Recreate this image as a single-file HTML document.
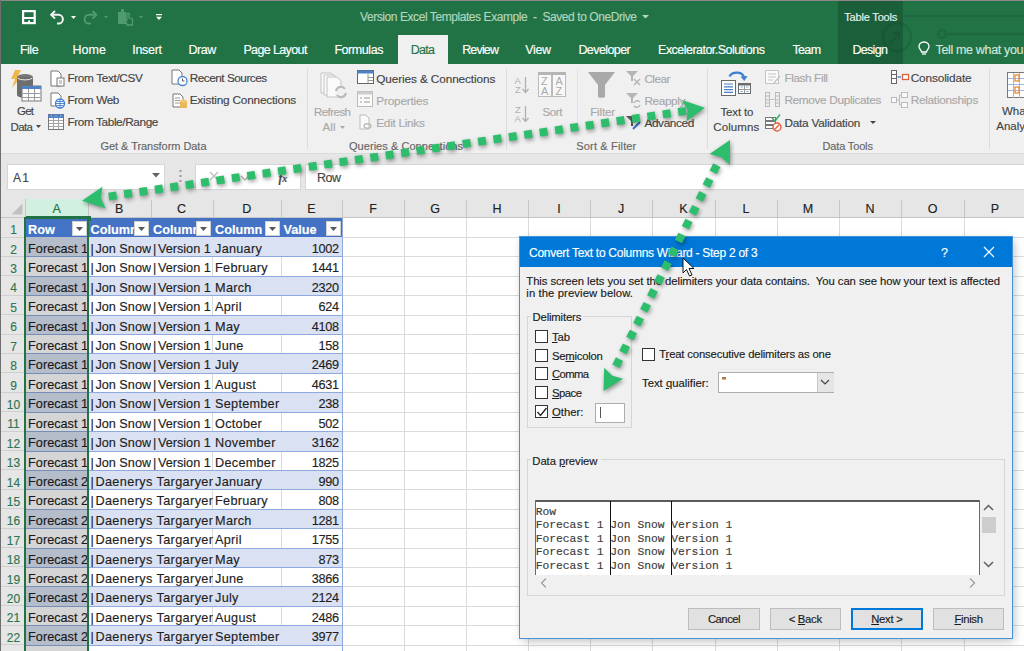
<!DOCTYPE html><html><head><meta charset="utf-8"><style>
html,body{margin:0;padding:0;}
body{width:1024px;height:651px;overflow:hidden;position:relative;background:#fff;font-family:"Liberation Sans",sans-serif;}
.b{position:absolute;}
.t{position:absolute;white-space:pre;line-height:1;-webkit-text-stroke:0.15px currentColor;}
.s{position:absolute;overflow:visible;}
</style></head><body>
<div class="b" style="left:0px;top:0px;width:1024px;height:64px;background:#217346;"></div>
<div class="b" style="left:838px;top:0px;width:65px;height:64px;background:#1b5f3a;"></div>
<svg class="s" style="left:838px;top:0" width="186" height="64" viewBox="0 0 186 64"><g stroke="#000" stroke-opacity="0.09" stroke-width="2.5" fill="none"><circle cx="59" cy="37" r="14"></circle><path d="M52 44 L60 34 M54 33 H61 V40"></path><path d="M66 16 H186"></path><path d="M109 34 H186"></path><circle cx="104" cy="34" r="4"></circle></g></svg>
<div class="b" style="left:0px;top:0px;width:1024px;height:1px;background:#8d8787;"></div>
<svg class="s" style="left:22px;top:10px;" width="15" height="15" viewBox="0 0 15 15"><g fill="none" stroke="#fff" stroke-width="2.2"><rect x="1.1" y="1.1" width="11.6" height="12"></rect></g><rect x="1" y="7" width="12" height="2" fill="#fff"></rect><rect x="6" y="10.5" width="2" height="3" fill="#fff"></rect></svg>
<svg class="s" style="left:49px;top:10px;" width="16" height="15" viewBox="0 0 16 15"><g fill="none" stroke="#f4f4f4" stroke-width="2"><path d="M2.5 4.8 H9.5 A4.4 4.4 0 0 1 9.5 13.6 H8"></path><path d="M6 1 L2.2 4.8 L6 8.6"></path></g></svg>
<svg class="s" style="left:70.5px;top:15.5px;" width="5" height="3" viewBox="0 0 5 3"><path d="M0 0 H5 L2.5 3 Z" fill="#fff"></path></svg>
<svg class="s" style="left:83px;top:10px;" width="16" height="15" viewBox="0 0 16 15"><g fill="none" stroke="#4f9a6e" stroke-width="2"><path d="M12.5 4.8 H6 A4.4 4.4 0 0 0 6 13.6 H8"></path><path d="M9.5 1 L13.3 4.8 L9.5 8.6"></path></g></svg>
<svg class="s" style="left:104px;top:15.5px;" width="4" height="2.5" viewBox="0 0 4 2.5"><path d="M0 0 H4 L2 2.5 Z" fill="#4f9a6e"></path></svg>
<svg class="s" style="left:117px;top:8px;" width="17" height="18" viewBox="0 0 17 18"><g fill="#4f9a6e"><rect x="1" y="4" width="8" height="12"></rect><rect x="4" y="1" width="3" height="4"></rect></g><path d="M10 5.5 V12 L8.5 12 L10 17 H15.5 V11 L12 10 V5.5 Z" fill="none" stroke="#4f9a6e" stroke-width="1.3"></path></svg>
<svg class="s" style="left:138.5px;top:15.5px;" width="4" height="2.5" viewBox="0 0 4 2.5"><path d="M0 0 H4 L2 2.5 Z" fill="#4f9a6e"></path></svg>
<svg class="s" style="left:155.5px;top:14px;" width="6" height="7" viewBox="0 0 6 7"><g fill="#fff"><rect x="0" y="0" width="6" height="1.2"></rect><path d="M0 2.8 H6 L3 6 Z"></path></g></svg>
<div class="t " style="left: 360px; top: 11.24px; font-size: 12px; color: rgb(178, 214, 191); letter-spacing: -0.428px;">Version Excel Templates Example &nbsp;-&nbsp; Saved to OneDrive</div>
<svg class="s" style="left:642px;top:15px;" width="7" height="4" viewBox="0 0 7 4"><path d="M0 0 H7 L3.5 3.5 Z" fill="#b2d6bf"></path></svg>
<div class="t " style="left: 844.3px; top: 12.09px; font-size: 11px; color: rgb(232, 241, 236); letter-spacing: -0.184px;">Table Tools</div>
<div class="b" style="left:398px;top:35px;width:50px;height:29px;background:#f0f0f0;"></div>
<div class="t " style="left: 20px; top: 43.62px; font-size: 12.5px; color: rgb(255, 255, 255); letter-spacing: -0.519px;">File</div>
<div class="t " style="left: 72.4px; top: 43.62px; font-size: 12.5px; color: rgb(255, 255, 255); letter-spacing: 0.085px;">Home</div>
<div class="t " style="left: 132.2px; top: 43.62px; font-size: 12.5px; color: rgb(255, 255, 255); letter-spacing: -0.273px;">Insert</div>
<div class="t " style="left: 188.4px; top: 43.62px; font-size: 12.5px; color: rgb(255, 255, 255); letter-spacing: -0.391px;">Draw</div>
<div class="t " style="left: 243.4px; top: 43.62px; font-size: 12.5px; color: rgb(255, 255, 255); letter-spacing: -0.62px;">Page Layout</div>
<div class="t " style="left: 334.4px; top: 43.62px; font-size: 12.5px; color: rgb(255, 255, 255); letter-spacing: -0.442px;">Formulas</div>
<div class="t " style="left: 410.7px; top: 43.62px; font-size: 12.5px; color: rgb(33, 115, 70); letter-spacing: -0.735px;">Data</div>
<div class="t " style="left: 462.2px; top: 43.62px; font-size: 12.5px; color: rgb(255, 255, 255); letter-spacing: -0.84px;">Review</div>
<div class="t " style="left: 525.2px; top: 43.62px; font-size: 12.5px; color: rgb(255, 255, 255); letter-spacing: -0.325px;">View</div>
<div class="t " style="left: 578.4px; top: 43.62px; font-size: 12.5px; color: rgb(255, 255, 255); letter-spacing: -0.573px;">Developer</div>
<div class="t " style="left: 658.1px; top: 43.62px; font-size: 12.5px; color: rgb(255, 255, 255); letter-spacing: -0.532px;">Excelerator.Solutions</div>
<div class="t " style="left: 792.4px; top: 43.62px; font-size: 12.5px; color: rgb(255, 255, 255); letter-spacing: -0.626px;">Team</div>
<div class="t " style="left: 852.4px; top: 43.62px; font-size: 12.5px; color: rgb(255, 255, 255); letter-spacing: -0.684px;">Design</div>
<div class="t " style="left: 935.5px; top: 43.62px; font-size: 12.5px; color: rgb(211, 230, 218); letter-spacing: -0.341px;">Tell me what you</div>
<svg class="s" style="left:918px;top:41px;" width="12" height="15" viewBox="0 0 12 15"><g fill="none" stroke="#fff" stroke-width="1.3"><path d="M6 1 C2.5 1 1 3.5 1 5.5 C1 8 3.5 9 3.5 11 H8.5 C8.5 9 11 8 11 5.5 C11 3.5 9.5 1 6 1 Z"></path><path d="M4 13 H8"></path></g></svg>
<div class="b" style="left:0px;top:64px;width:1024px;height:89px;background:#f0f0f0;"></div>
<div class="b" style="left:0px;top:153px;width:1024px;height:1px;background:#dcdcdc;"></div>
<div class="b" style="left:307px;top:69px;width:1px;height:80px;background:#dcdcdc;"></div>
<div class="b" style="left:506px;top:69px;width:1px;height:80px;background:#dcdcdc;"></div>
<div class="b" style="left:707px;top:69px;width:1px;height:80px;background:#dcdcdc;"></div>
<div class="b" style="left:989px;top:69px;width:1px;height:80px;background:#dcdcdc;"></div>
<div class="t " style="left: 17px; top: 106.47px; font-size: 11.5px; color: rgb(68, 68, 68); letter-spacing: -0.773px;">Get</div>
<div class="t " style="left: 10.5px; top: 121.67px; font-size: 11.5px; color: rgb(68, 68, 68); letter-spacing: -0.599px;">Data</div>
<svg class="s" style="left:36px;top:125px;" width="5" height="3" viewBox="0 0 5 3"><path d="M0 0 H5 L2.5 3 Z" fill="#444"></path></svg>
<svg class="s" style="left:9px;top:69px;" width="33" height="33" viewBox="0 0 33 33"><path d="M6 1 H12 L8 9 H11 L3 19 L6 10 H2 Z" fill="#f0b64a"></path><g><ellipse cx="16" cy="8" rx="8" ry="3" fill="#777"></ellipse><rect x="8" y="8" width="16" height="18" fill="#6e6e6e"></rect><ellipse cx="16" cy="26" rx="8" ry="3" fill="#6e6e6e"></ellipse><path d="M8.5 9 A8 3 0 0 0 23.5 9" fill="none" stroke="#e8e8e8" stroke-width="1"></path></g><rect x="13" y="17" width="19" height="15" fill="#fff" stroke="#777" stroke-width="1"></rect><rect x="13" y="17" width="19" height="3" fill="#4f81c7"></rect><g stroke="#999" stroke-width="1"><path d="M13.5 24.5 H31.5 M13.5 28.5 H31.5 M19.5 20 V32 M25.5 20 V32"></path></g></svg>
<div class="t " style="left: 67.4px; top: 73.31px; font-size: 11.8px; color: rgb(68, 68, 68); letter-spacing: -0.355px;">From Text/CSV</div>
<div class="t " style="left: 67.4px; top: 95.21px; font-size: 11.8px; color: rgb(68, 68, 68); letter-spacing: -0.406px;">From Web</div>
<div class="t " style="left: 67.4px; top: 117.31px; font-size: 11.8px; color: rgb(68, 68, 68); letter-spacing: -0.39px;">From Table/Range</div>
<div class="t " style="left: 189.7px; top: 73.21px; font-size: 11.8px; color: rgb(68, 68, 68); letter-spacing: -0.495px;">Recent Sources</div>
<div class="t " style="left: 189.7px; top: 95.21px; font-size: 11.8px; color: rgb(68, 68, 68); letter-spacing: -0.193px;">Existing Connections</div>
<svg class="s" style="left:50px;top:70px;" width="15" height="17" viewBox="0 0 15 17"><path d="M1 1 H8 L11 4 V16 H1 Z" fill="#fff" stroke="#777"></path><rect x="7" y="8" width="7" height="8" fill="#fff" stroke="#777"></rect><path d="M9 11 H12 M9 13 H12" stroke="#999"></path></svg>
<svg class="s" style="left:50px;top:92px;" width="15" height="17" viewBox="0 0 15 17"><path d="M1 1 H8 L11 4 V14 H1 Z" fill="#fff" stroke="#777"></path><circle cx="10" cy="11.5" r="4.5" fill="#fff" stroke="#3d7ecf" stroke-width="1.3"></circle><path d="M5.5 11.5 H14.5 M10 7 V16 M6.5 9.5 H13.5 M6.5 13.5 H13.5" stroke="#3d7ecf" stroke-width="0.9"></path></svg>
<svg class="s" style="left:48px;top:114px;" width="17" height="17" viewBox="0 0 17 17"><rect x="0.5" y="0.5" width="15" height="15" fill="#fff" stroke="#777"></rect><rect x="0.5" y="0.5" width="15" height="3.5" fill="#4f81c7"></rect><path d="M3 2 H4 M7.5 2 H8.5 M12 2 H13" stroke="#cfe0f5"></path><path d="M1 6.5 H15 M1 9.5 H15 M1 12.5 H15 M5.5 4 V15 M10.5 4 V15" stroke="#a5a5a5"></path></svg>
<svg class="s" style="left:171px;top:69px;" width="17" height="18" viewBox="0 0 17 18"><path d="M1 1 H8 L11 4 V15 H1 Z" fill="#fff" stroke="#777"></path><circle cx="11.5" cy="12" r="4.5" fill="#fff" stroke="#4a86d0" stroke-width="1.3"></circle><path d="M11.5 9.5 V12 H13.5" stroke="#555" fill="none"></path></svg>
<svg class="s" style="left:172px;top:93px;" width="16" height="16" viewBox="0 0 16 16"><path d="M1 1 H8 L11 4 V14 H1 Z" fill="#fff" stroke="#777"></path><path d="M3 5 H8 M3 7.5 H8 M3 10 H8" stroke="#999"></path><rect x="8" y="8" width="7" height="7" fill="#e9b659"></rect><ellipse cx="11.5" cy="8" rx="3.5" ry="1.5" fill="#f3c874"></ellipse></svg>
<div class="t " style="left: 100.5px; top: 141.09px; font-size: 11px; color: rgb(102, 102, 102); letter-spacing: -0.052px;">Get &amp; Transform Data</div>
<svg class="s" style="left:319px;top:71px;" width="31" height="30" viewBox="0 0 31 30"><g fill="#fafafa" stroke="#c3c3c3"><path d="M2 2 H12 L16 6 V22 H2 Z"></path><path d="M5 4 H15 L19 8 V24 H5 Z"></path><path d="M8 6 H18 L22 10 V26 H8 Z"></path></g><circle cx="22" cy="21" r="6" fill="#f0f0f0"></circle><g fill="none" stroke="#b8b8b8" stroke-width="2"><path d="M17 20 A5 5 0 0 1 26 18"></path><path d="M27 22 A5 5 0 0 1 18 24"></path></g></svg>
<div class="t " style="left: 314px; top: 106.57px; font-size: 11.5px; color: rgb(168, 168, 168); letter-spacing: -0.547px;">Refresh</div>
<div class="t " style="left: 322.6px; top: 122.17px; font-size: 11.5px; color: rgb(168, 168, 168); letter-spacing: 0.109px;">All</div>
<svg class="s" style="left:340px;top:126px;" width="5" height="3" viewBox="0 0 5 3"><path d="M0 0 H5 L2.5 3 Z" fill="#a8a8a8"></path></svg>
<svg class="s" style="left:357px;top:70px;" width="17" height="15" viewBox="0 0 17 15"><rect x="0.5" y="0.5" width="16" height="13" fill="#fff" stroke="#666"></rect><rect x="0.5" y="0.5" width="16" height="3" fill="#4f81c7"></rect><path d="M11 4 V13 M11 7.5 H16 M11 10.5 H16" stroke="#999"></path></svg>
<div class="t " style="left: 376.3px; top: 73.51px; font-size: 11.8px; color: rgb(68, 68, 68); letter-spacing: -0.116px;">Queries &amp; Connections</div>
<svg class="s" style="left:357px;top:91px;" width="17" height="17" viewBox="0 0 17 17"><rect x="0.5" y="0.5" width="15" height="15" fill="#fafafa" stroke="#bbb"></rect><rect x="0.5" y="0.5" width="15" height="3" fill="#ccc"></rect><path d="M3 7 H5 M7 7 H13 M3 11 H5 M7 11 H13" stroke="#bbb" stroke-width="1.3"></path></svg>
<div class="t " style="left: 376.3px; top: 95.91px; font-size: 11.8px; color: rgb(168, 168, 168); letter-spacing: -0.198px;">Properties</div>
<svg class="s" style="left:359px;top:114px;" width="15" height="17" viewBox="0 0 15 17"><path d="M1 1 H7 L10 4 V15 H1 Z" fill="#fafafa" stroke="#bbb"></path><path d="M5 12 C5 9 12 9 12 12 C12 15 5 15 5 12" fill="none" stroke="#bbb" stroke-width="1.3"></path></svg>
<div class="t " style="left: 376.3px; top: 117.51px; font-size: 11.8px; color: rgb(168, 168, 168); letter-spacing: -0.295px;">Edit Links</div>
<div class="t " style="left: 349px; top: 141.09px; font-size: 11px; color: rgb(102, 102, 102); letter-spacing: 0.044px;">Queries &amp; Connections</div>
<svg class="s" style="left:514px;top:76px;" width="17" height="18" viewBox="0 0 17 18"><g font-family="Liberation Sans" font-size="9.5" fill="#b0b0b0"><text x="0.5" y="8">A</text><text x="1" y="16.5">Z</text></g><path d="M11.5 1 V16 M8.5 13 L11.5 16.5 L14.5 13" stroke="#b0b0b0" fill="none" stroke-width="1.3"></path></svg>
<svg class="s" style="left:514px;top:105px;" width="17" height="18" viewBox="0 0 17 18"><g font-family="Liberation Sans" font-size="9.5" fill="#b0b0b0"><text x="1" y="8">Z</text><text x="0.5" y="16.5">A</text></g><path d="M11.5 1 V16 M8.5 13 L11.5 16.5 L14.5 13" stroke="#b0b0b0" fill="none" stroke-width="1.3"></path></svg>
<svg class="s" style="left:538px;top:72px;" width="29" height="25" viewBox="0 0 29 25"><rect x="0.5" y="1.5" width="13" height="23" fill="#f8f8f8" stroke="#bbb"></rect><rect x="14.5" y="1.5" width="13" height="23" fill="#f8f8f8" stroke="#bbb"></rect><rect x="0" y="0" width="28" height="3" fill="#b5b5b5"></rect><g font-family="Liberation Sans" font-size="11" fill="#aaa"><text x="3" y="13">Z</text><text x="3" y="23">A</text><text x="17.5" y="13">A</text><text x="17.5" y="23">Z</text></g></svg>
<div class="t " style="left: 542.5px; top: 107.07px; font-size: 11.5px; color: rgb(168, 168, 168); letter-spacing: -0.365px;">Sort</div>
<svg class="s" style="left:587px;top:71px;" width="29" height="27" viewBox="0 0 29 27"><path d="M1 1 H28 L18 14 V26 C18 27 11 27 11 26 V14 Z" fill="#a9a9a9"></path></svg>
<div class="b" style="left:577px;top:70px;width:1px;height:56px;background:#e2e2e2;"></div>
<div class="t " style="left: 590.2px; top: 107.07px; font-size: 11.5px; color: rgb(168, 168, 168); letter-spacing: -0.113px;">Filter</div>
<svg class="s" style="left:626px;top:70px;" width="16" height="16" viewBox="0 0 16 16"><path d="M0 1 H12 L7 6 V11 H5 V6 Z" fill="#b5b5b5"></path><path d="M8 9 L14 15 M14 9 L8 15" stroke="#b5b5b5" stroke-width="1.4"></path></svg>
<div class="t " style="left: 644.4px; top: 73.51px; font-size: 11.8px; color: rgb(168, 168, 168); letter-spacing: -0.551px;">Clear</div>
<svg class="s" style="left:626px;top:92px;" width="16" height="16" viewBox="0 0 16 16"><path d="M0 1 H12 L7 6 V11 H5 V6 Z" fill="#b5b5b5"></path><path d="M8 11 A3.5 3.5 0 0 1 14 10 M14 13 A3.5 3.5 0 0 1 8 14" stroke="#b5b5b5" stroke-width="1.4" fill="none"></path></svg>
<div class="t " style="left: 644.4px; top: 95.91px; font-size: 11.8px; color: rgb(168, 168, 168); letter-spacing: -0.383px;">Reapply</div>
<svg class="s" style="left:626px;top:115px;" width="16" height="15" viewBox="0 0 16 15"><path d="M0 1 H12 L7 6 V11 H5 V6 Z" fill="#555"></path><path d="M7 14 L14 7" stroke="#3a6fc4" stroke-width="2"></path></svg>
<div class="t " style="left: 644.4px; top: 117.51px; font-size: 11.8px; color: rgb(68, 68, 68); letter-spacing: -0.355px;">Advanced</div>
<div class="t " style="left: 576.3px; top: 141.09px; font-size: 11px; color: rgb(102, 102, 102); letter-spacing: 0.16px;">Sort &amp; Filter</div>
<svg class="s" style="left:720px;top:71px;" width="33" height="27" viewBox="0 0 33 27"><rect x="1.5" y="9.5" width="14" height="15" fill="#fff" stroke="#6a6a6a"></rect><path d="M4 13 H13 M4 15.8 H13 M4 18.6 H13 M4 21.4 H13" stroke="#4a7fc8" stroke-width="1.2"></path><rect x="18.5" y="12.5" width="12" height="10" fill="#fff" stroke="#6a6a6a"></rect><rect x="18.5" y="12.5" width="12" height="2" fill="#6a6a6a"></rect><path d="M24.5 14 V22 M19 18.5 H30" stroke="#999"></path><path d="M20.5 16 H23 M26 16 H28.5 M20.5 20.5 H23 M26 20.5 H28.5" stroke="#8fb0de" stroke-width="1.2"></path><path d="M9.5 5.5 C12 0.5 22 0 24 6" fill="none" stroke="#3d7ecf" stroke-width="2.2"></path><path d="M20.5 5.5 L24.3 10 L27.5 5 Z" fill="#3d7ecf"></path></svg>
<div class="t " style="left: 720.5px; top: 106.87px; font-size: 11.5px; color: rgb(68, 68, 68); letter-spacing: -0.148px;">Text to</div>
<div class="t " style="left: 713.3px; top: 121.87px; font-size: 11.5px; color: rgb(68, 68, 68); letter-spacing: 0.102px;">Columns</div>
<svg class="s" style="left:765px;top:70px;" width="16" height="15" viewBox="0 0 16 15"><rect x="0.5" y="0.5" width="13" height="13" fill="#fafafa" stroke="#c5c5c5"></rect><path d="M3 4 H11 M3 7 H11 M3 10 H8" stroke="#c5c5c5"></path><path d="M9 13 L15 6" stroke="#c5c5c5" stroke-width="1.5"></path></svg>
<div class="t " style="left: 784.4px; top: 73.41px; font-size: 11.8px; color: rgb(168, 168, 168); letter-spacing: -0.4px;">Flash Fill</div>
<svg class="s" style="left:765px;top:92px;" width="16" height="16" viewBox="0 0 16 16"><rect x="0.5" y="0.5" width="4" height="14" fill="#eee" stroke="#bbb"></rect><rect x="10.5" y="0.5" width="4" height="14" fill="#eee" stroke="#bbb"></rect><path d="M1 4 H4 M1 8 H4 M1 11 H4 M11 4 H14 M11 8 H14 M11 11 H14" stroke="#bbb"></path><path d="M5.5 7.5 H9.5" stroke="#bbb"></path></svg>
<div class="t " style="left: 784.4px; top: 95.41px; font-size: 11.8px; color: rgb(168, 168, 168); letter-spacing: -0.331px;">Remove Duplicates</div>
<svg class="s" style="left:765px;top:114px;" width="17" height="17" viewBox="0 0 17 17"><rect x="0.5" y="3.5" width="10" height="3" fill="#fff" stroke="#777"></rect><rect x="0.5" y="7.5" width="10" height="3" fill="#fff" stroke="#777"></rect><rect x="0.5" y="11.5" width="8" height="3" fill="#fff" stroke="#777"></rect><path d="M7 4 L10 7 L15 0.5" stroke="#3aa86b" stroke-width="1.5" fill="none"></path><circle cx="12" cy="13" r="4" fill="#fff" stroke="#e0603e" stroke-width="1.5"></circle><path d="M9.5 15.5 L14.5 10.5" stroke="#e0603e" stroke-width="1.5"></path></svg>
<div class="t " style="left: 784.4px; top: 118.31px; font-size: 11.8px; color: rgb(68, 68, 68); letter-spacing: -0.224px;">Data Validation</div>
<svg class="s" style="left:870px;top:121px;" width="6" height="3" viewBox="0 0 6 3"><path d="M0 0 H6 L3 3 Z" fill="#444"></path></svg>
<svg class="s" style="left:891px;top:70px;" width="18" height="15" viewBox="0 0 18 15"><rect x="0.5" y="0.5" width="5" height="13" fill="#fff" stroke="#666"></rect><path d="M1 4.5 H5 M1 8.5 H5" stroke="#666"></path><path d="M6.5 7 H10" stroke="#3d7ecf" stroke-width="1.3"></path><rect x="11.5" y="4.5" width="6" height="5" fill="#fff" stroke="#e0603e" stroke-width="1.3"></rect></svg>
<div class="t " style="left: 910.7px; top: 73.21px; font-size: 11.8px; color: rgb(68, 68, 68); letter-spacing: -0.131px;">Consolidate</div>
<svg class="s" style="left:891px;top:92px;" width="18" height="16" viewBox="0 0 18 16"><rect x="0.5" y="5.5" width="5" height="5" fill="#fafafa" stroke="#bbb"></rect><rect x="10.5" y="0.5" width="6" height="5" fill="#fafafa" stroke="#bbb"></rect><rect x="10.5" y="10.5" width="6" height="5" fill="#fafafa" stroke="#bbb"></rect><path d="M6 8 H8.5 V3 H10 M8.5 8 V13 H10" stroke="#bbb" fill="none"></path></svg>
<div class="t " style="left: 910.7px; top: 95.41px; font-size: 11.8px; color: rgb(168, 168, 168); letter-spacing: -0.269px;">Relationships</div>
<div class="t " style="left: 822.6px; top: 141.09px; font-size: 11px; color: rgb(102, 102, 102); letter-spacing: -0.165px;">Data Tools</div>
<svg class="s" style="left:1007px;top:72px;" width="17" height="26" viewBox="0 0 17 26"><rect x="0.5" y="0.5" width="20" height="25" fill="#fff" stroke="#777"></rect><path d="M1 6.5 H21 M1 12.5 H21 M1 18.5 H21 M6.5 1 V26 M12.5 1 V26" stroke="#9bb8e0"></path><rect x="8" y="3" width="4" height="6" fill="none" stroke="#e88a3c" stroke-width="1.3"></rect><rect x="8" y="15" width="4" height="6" fill="none" stroke="#e88a3c" stroke-width="1.3"></rect></svg>
<div class="t " style="left:1002.00px;top:105.67px;font-size:11.5px;color:#444;">What-If</div>
<div class="t " style="left:996.30px;top:121.17px;font-size:11.5px;color:#444;">Analysis</div>
<div class="b" style="left:0px;top:154px;width:1024px;height:45px;background:#e6e6e6;"></div>
<div class="b" style="left:7px;top:164px;width:158px;height:26px;background:#fff;box-shadow:0 0 0 1px #d6d6d6 inset;"></div>
<div class="t " style="left: 13px; top: 171.74px; font-size: 12px; color: rgb(68, 68, 68); letter-spacing: 1.313px;">A1</div>
<svg class="s" style="left:152px;top:173px;" width="8" height="5" viewBox="0 0 8 5"><path d="M0 0 H8 L4 4.5 Z" fill="#666"></path></svg>
<svg class="s" style="left:179px;top:169px;" width="3" height="14" viewBox="0 0 3 14"><g fill="#9a9a9a"><rect x="0.5" y="1" width="2" height="2"></rect><rect x="0.5" y="6" width="2" height="2"></rect><rect x="0.5" y="11" width="2" height="2"></rect></g></svg>
<div class="b" style="left:195px;top:164px;width:106px;height:26px;background:#fff;box-shadow:0 0 0 1px #d6d6d6 inset;"></div>
<svg class="s" style="left:208.5px;top:171px;" width="10" height="10" viewBox="0 0 10 10"><path d="M1 1 L9 9 M9 1 L1 9" stroke="#bdbdbd" stroke-width="1.2"></path></svg>
<svg class="s" style="left:240px;top:170px;" width="14" height="12" viewBox="0 0 14 12"><path d="M1 6 L5 10 L13 1" stroke="#b0b0b0" stroke-width="1.3" fill="none"></path></svg>
<div class="t " style="left:278.50px;top:172.67px;font-size:11.5px;color:#4a4a4a;font-family:'Liberation Serif', serif;font-weight:bold;"><i>f<span style="font-size:10px">x</span></i></div>
<div class="b" style="left:305px;top:164px;width:720px;height:26px;background:#fff;box-shadow:0 0 0 1px #d6d6d6 inset;"></div>
<div class="t " style="left: 317px; top: 172.32px; font-size: 12.5px; color: rgb(68, 68, 68); letter-spacing: -0.508px;">Row</div>
<div class="b" style="left:1px;top:199px;width:1023px;height:19px;background:#e6e6e6;"></div>
<div class="b" style="left:0px;top:217px;width:1024px;height:1px;background:#c6c6c6;"></div>
<div class="b" style="left:1px;top:218px;width:24.5px;height:433px;background:#e6e6e6;"></div>
<div class="b" style="left:24.5px;top:199px;width:1px;height:452px;background:#c6c6c6;"></div>
<svg class="s" style="left:11px;top:203px;" width="12" height="12" viewBox="0 0 12 12"><path d="M11.5 0.5 V11.5 H0.5 Z" fill="#c0c0c0"></path></svg>
<div class="b" style="left:25.5px;top:199px;width:62.5px;height:18px;background:#d2f0df;"></div>
<div class="b" style="left:25.5px;top:215.5px;width:62.5px;height:2px;background:#217346;"></div>
<div class="t" style="left:25.5px;top:203px;width:62.5px;text-align:center;font-size:12.5px;color:#217346;">A</div>
<div class="b" style="left:88px;top:200px;width:1px;height:17px;background:#c6c6c6;"></div>
<div class="t" style="left:88px;top:203px;width:62.5px;text-align:center;font-size:12.5px;color:#222;">B</div>
<div class="b" style="left:150.5px;top:200px;width:1px;height:17px;background:#c6c6c6;"></div>
<div class="t" style="left:150.5px;top:203px;width:62.0px;text-align:center;font-size:12.5px;color:#222;">C</div>
<div class="b" style="left:212.5px;top:200px;width:1px;height:17px;background:#c6c6c6;"></div>
<div class="t" style="left:212.5px;top:203px;width:68.5px;text-align:center;font-size:12.5px;color:#222;">D</div>
<div class="b" style="left:281px;top:200px;width:1px;height:17px;background:#c6c6c6;"></div>
<div class="t" style="left:281px;top:203px;width:61px;text-align:center;font-size:12.5px;color:#222;">E</div>
<div class="b" style="left:342px;top:200px;width:1px;height:17px;background:#c6c6c6;"></div>
<div class="t" style="left:342px;top:203px;width:62px;text-align:center;font-size:12.5px;color:#222;">F</div>
<div class="b" style="left:404px;top:200px;width:1px;height:17px;background:#c6c6c6;"></div>
<div class="t" style="left:404px;top:203px;width:62px;text-align:center;font-size:12.5px;color:#222;">G</div>
<div class="b" style="left:466px;top:200px;width:1px;height:17px;background:#c6c6c6;"></div>
<div class="t" style="left:466px;top:203px;width:62px;text-align:center;font-size:12.5px;color:#222;">H</div>
<div class="b" style="left:528px;top:200px;width:1px;height:17px;background:#c6c6c6;"></div>
<div class="t" style="left:528px;top:203px;width:62px;text-align:center;font-size:12.5px;color:#222;">I</div>
<div class="b" style="left:590px;top:200px;width:1px;height:17px;background:#c6c6c6;"></div>
<div class="t" style="left:590px;top:203px;width:62px;text-align:center;font-size:12.5px;color:#222;">J</div>
<div class="b" style="left:652px;top:200px;width:1px;height:17px;background:#c6c6c6;"></div>
<div class="t" style="left:652px;top:203px;width:63px;text-align:center;font-size:12.5px;color:#222;">K</div>
<div class="b" style="left:715px;top:200px;width:1px;height:17px;background:#c6c6c6;"></div>
<div class="t" style="left:715px;top:203px;width:62px;text-align:center;font-size:12.5px;color:#222;">L</div>
<div class="b" style="left:777px;top:200px;width:1px;height:17px;background:#c6c6c6;"></div>
<div class="t" style="left:777px;top:203px;width:62px;text-align:center;font-size:12.5px;color:#222;">M</div>
<div class="b" style="left:839px;top:200px;width:1px;height:17px;background:#c6c6c6;"></div>
<div class="t" style="left:839px;top:203px;width:62px;text-align:center;font-size:12.5px;color:#222;">N</div>
<div class="b" style="left:901px;top:200px;width:1px;height:17px;background:#c6c6c6;"></div>
<div class="t" style="left:901px;top:203px;width:63px;text-align:center;font-size:12.5px;color:#222;">O</div>
<div class="b" style="left:964px;top:200px;width:1px;height:17px;background:#c6c6c6;"></div>
<div class="t" style="left:964px;top:203px;width:62px;text-align:center;font-size:12.5px;color:#222;">P</div>
<div class="b" style="left:343px;top:237px;width:681px;height:1px;background:#dadada;"></div>
<div class="b" style="left:1px;top:237px;width:24.5px;height:1px;background:#cfcfcf;"></div>
<div class="b" style="left:343px;top:256px;width:681px;height:1px;background:#dadada;"></div>
<div class="b" style="left:1px;top:256px;width:24.5px;height:1px;background:#cfcfcf;"></div>
<div class="b" style="left:343px;top:276px;width:681px;height:1px;background:#dadada;"></div>
<div class="b" style="left:1px;top:275px;width:24.5px;height:1px;background:#cfcfcf;"></div>
<div class="b" style="left:343px;top:295px;width:681px;height:1px;background:#dadada;"></div>
<div class="b" style="left:1px;top:295px;width:24.5px;height:1px;background:#cfcfcf;"></div>
<div class="b" style="left:343px;top:315px;width:681px;height:1px;background:#dadada;"></div>
<div class="b" style="left:1px;top:314px;width:24.5px;height:1px;background:#cfcfcf;"></div>
<div class="b" style="left:343px;top:334px;width:681px;height:1px;background:#dadada;"></div>
<div class="b" style="left:1px;top:334px;width:24.5px;height:1px;background:#cfcfcf;"></div>
<div class="b" style="left:343px;top:353px;width:681px;height:1px;background:#dadada;"></div>
<div class="b" style="left:1px;top:353px;width:24.5px;height:1px;background:#cfcfcf;"></div>
<div class="b" style="left:343px;top:373px;width:681px;height:1px;background:#dadada;"></div>
<div class="b" style="left:1px;top:372px;width:24.5px;height:1px;background:#cfcfcf;"></div>
<div class="b" style="left:343px;top:392px;width:681px;height:1px;background:#dadada;"></div>
<div class="b" style="left:1px;top:392px;width:24.5px;height:1px;background:#cfcfcf;"></div>
<div class="b" style="left:343px;top:412px;width:681px;height:1px;background:#dadada;"></div>
<div class="b" style="left:1px;top:411px;width:24.5px;height:1px;background:#cfcfcf;"></div>
<div class="b" style="left:343px;top:431px;width:681px;height:1px;background:#dadada;"></div>
<div class="b" style="left:1px;top:431px;width:24.5px;height:1px;background:#cfcfcf;"></div>
<div class="b" style="left:343px;top:451px;width:681px;height:1px;background:#dadada;"></div>
<div class="b" style="left:1px;top:450px;width:24.5px;height:1px;background:#cfcfcf;"></div>
<div class="b" style="left:343px;top:470px;width:681px;height:1px;background:#dadada;"></div>
<div class="b" style="left:1px;top:469px;width:24.5px;height:1px;background:#cfcfcf;"></div>
<div class="b" style="left:343px;top:489px;width:681px;height:1px;background:#dadada;"></div>
<div class="b" style="left:1px;top:489px;width:24.5px;height:1px;background:#cfcfcf;"></div>
<div class="b" style="left:343px;top:509px;width:681px;height:1px;background:#dadada;"></div>
<div class="b" style="left:1px;top:508px;width:24.5px;height:1px;background:#cfcfcf;"></div>
<div class="b" style="left:343px;top:528px;width:681px;height:1px;background:#dadada;"></div>
<div class="b" style="left:1px;top:528px;width:24.5px;height:1px;background:#cfcfcf;"></div>
<div class="b" style="left:343px;top:548px;width:681px;height:1px;background:#dadada;"></div>
<div class="b" style="left:1px;top:547px;width:24.5px;height:1px;background:#cfcfcf;"></div>
<div class="b" style="left:343px;top:567px;width:681px;height:1px;background:#dadada;"></div>
<div class="b" style="left:1px;top:566px;width:24.5px;height:1px;background:#cfcfcf;"></div>
<div class="b" style="left:343px;top:586px;width:681px;height:1px;background:#dadada;"></div>
<div class="b" style="left:1px;top:586px;width:24.5px;height:1px;background:#cfcfcf;"></div>
<div class="b" style="left:343px;top:606px;width:681px;height:1px;background:#dadada;"></div>
<div class="b" style="left:1px;top:605px;width:24.5px;height:1px;background:#cfcfcf;"></div>
<div class="b" style="left:343px;top:625px;width:681px;height:1px;background:#dadada;"></div>
<div class="b" style="left:1px;top:625px;width:24.5px;height:1px;background:#cfcfcf;"></div>
<div class="b" style="left:343px;top:645px;width:681px;height:1px;background:#dadada;"></div>
<div class="b" style="left:1px;top:644px;width:24.5px;height:1px;background:#cfcfcf;"></div>
<div class="b" style="left:343px;top:664px;width:681px;height:1px;background:#dadada;"></div>
<div class="b" style="left:1px;top:664px;width:24.5px;height:1px;background:#cfcfcf;"></div>
<div class="b" style="left:342px;top:218px;width:1px;height:433px;background:#dadada;"></div>
<div class="b" style="left:404px;top:218px;width:1px;height:433px;background:#dadada;"></div>
<div class="b" style="left:466px;top:218px;width:1px;height:433px;background:#dadada;"></div>
<div class="b" style="left:528px;top:218px;width:1px;height:433px;background:#dadada;"></div>
<div class="b" style="left:590px;top:218px;width:1px;height:433px;background:#dadada;"></div>
<div class="b" style="left:652px;top:218px;width:1px;height:433px;background:#dadada;"></div>
<div class="b" style="left:715px;top:218px;width:1px;height:433px;background:#dadada;"></div>
<div class="b" style="left:777px;top:218px;width:1px;height:433px;background:#dadada;"></div>
<div class="b" style="left:839px;top:218px;width:1px;height:433px;background:#dadada;"></div>
<div class="b" style="left:901px;top:218px;width:1px;height:433px;background:#dadada;"></div>
<div class="b" style="left:964px;top:218px;width:1px;height:433px;background:#dadada;"></div>
<div class="b" style="left:1026px;top:218px;width:1px;height:433px;background:#dadada;"></div>
<div class="b" style="left:25.5px;top:218px;width:317.5px;height:19px;background:#4472c4;"></div>
<div class="b" style="left:25.5px;top:218px;width:46.5px;height:19px;overflow:hidden;"><div class="t" style="left:2.5px;top:5.5px;font-size:12.7px;color:#fff;font-weight:bold;">Row</div></div>
<div class="b" style="left:71.5px;top:221px;width:15px;height:15px;background:#fff;box-shadow:0 0 0 1px #d0d0d0 inset;"></div>
<svg class="s" style="left:75.5px;top:226.5px;" width="7" height="4" viewBox="0 0 7 4"><path d="M0 0 H7 L3.5 4 Z" fill="#555"></path></svg>
<div class="b" style="left:88px;top:218px;width:46.5px;height:19px;overflow:hidden;"><div class="t" style="left:2.5px;top:5.5px;font-size:12.7px;color:#fff;font-weight:bold;">Column1</div></div>
<div class="b" style="left:134.0px;top:221px;width:15px;height:15px;background:#fff;box-shadow:0 0 0 1px #d0d0d0 inset;"></div>
<svg class="s" style="left:138.0px;top:226.5px;" width="7" height="4" viewBox="0 0 7 4"><path d="M0 0 H7 L3.5 4 Z" fill="#555"></path></svg>
<div class="b" style="left:150.5px;top:218px;width:46.0px;height:19px;overflow:hidden;"><div class="t" style="left:2.5px;top:5.5px;font-size:12.7px;color:#fff;font-weight:bold;">Column2</div></div>
<div class="b" style="left:196.0px;top:221px;width:15px;height:15px;background:#fff;box-shadow:0 0 0 1px #d0d0d0 inset;"></div>
<svg class="s" style="left:200.0px;top:226.5px;" width="7" height="4" viewBox="0 0 7 4"><path d="M0 0 H7 L3.5 4 Z" fill="#555"></path></svg>
<div class="b" style="left:212.5px;top:218px;width:52.5px;height:19px;overflow:hidden;"><div class="t" style="left:2.5px;top:5.5px;font-size:12.7px;color:#fff;font-weight:bold;">Column</div></div>
<div class="b" style="left:264.5px;top:221px;width:15px;height:15px;background:#fff;box-shadow:0 0 0 1px #d0d0d0 inset;"></div>
<svg class="s" style="left:268.5px;top:226.5px;" width="7" height="4" viewBox="0 0 7 4"><path d="M0 0 H7 L3.5 4 Z" fill="#555"></path></svg>
<div class="b" style="left:281px;top:218px;width:45px;height:19px;overflow:hidden;"><div class="t" style="left:2.5px;top:5.5px;font-size:12.7px;color:#fff;font-weight:bold;">Value</div></div>
<div class="b" style="left:325.5px;top:221px;width:15px;height:15px;background:#fff;box-shadow:0 0 0 1px #d0d0d0 inset;"></div>
<svg class="s" style="left:329.5px;top:226.5px;" width="7" height="4" viewBox="0 0 7 4"><path d="M0 0 H7 L3.5 4 Z" fill="#555"></path></svg>
<div class="b" style="left:25.5px;top:237px;width:317.5px;height:19px;background:#d9e1f2;"></div>
<div class="b" style="left:25.5px;top:237px;width:62.5px;height:19px;overflow:hidden;"><div class="t" style="left:2.6px;top:6.0px;font-size:12.7px;color:#1e1e1e;">Forecast 1</div></div>
<div class="b" style="left:88px;top:237px;width:62.5px;height:19px;overflow:hidden;"><div class="t" style="left:2.6px;top:6.0px;font-size:12.7px;color:#1e1e1e;"><span style="margin-right:1.5px">|</span>Jon Snow</div></div>
<div class="b" style="left:150.5px;top:237px;width:62.0px;height:19px;overflow:hidden;"><div class="t" style="left:2.6px;top:6.0px;font-size:12.7px;color:#1e1e1e;"><span style="margin-right:1.5px">|</span>Version 1</div></div>
<div class="b" style="left:212.5px;top:237px;width:68.5px;height:19px;overflow:hidden;"><div class="t" style="left:2.6px;top:6.0px;font-size:12.7px;color:#1e1e1e;"><span style="letter-spacing:0.25px">January</span></div></div>
<div class="b" style="left:281px;top:237px;width:60px;height:19px;overflow:hidden;"><div class="t" style="right:2.2px;top:6.0px;font-size:12.7px;color:#1e1e1e;letter-spacing:-0.3px;">1002</div></div>
<div class="b" style="left:25.5px;top:256px;width:317.5px;height:20px;background:#ffffff;"></div>
<div class="b" style="left:212px;top:256px;width:1px;height:20px;background:#dadada;"></div>
<div class="b" style="left:281px;top:256px;width:1px;height:20px;background:#dadada;"></div>
<div class="b" style="left:25.5px;top:256px;width:317.5px;height:1px;background:#8ea9db;"></div>
<div class="b" style="left:25.5px;top:256px;width:62.5px;height:20px;overflow:hidden;"><div class="t" style="left:2.6px;top:6.0px;font-size:12.7px;color:#1e1e1e;">Forecast 1</div></div>
<div class="b" style="left:88px;top:256px;width:62.5px;height:20px;overflow:hidden;"><div class="t" style="left:2.6px;top:6.0px;font-size:12.7px;color:#1e1e1e;"><span style="margin-right:1.5px">|</span>Jon Snow</div></div>
<div class="b" style="left:150.5px;top:256px;width:62.0px;height:20px;overflow:hidden;"><div class="t" style="left:2.6px;top:6.0px;font-size:12.7px;color:#1e1e1e;"><span style="margin-right:1.5px">|</span>Version 1</div></div>
<div class="b" style="left:212.5px;top:256px;width:68.5px;height:20px;overflow:hidden;"><div class="t" style="left:2.6px;top:6.0px;font-size:12.7px;color:#1e1e1e;"><span style="letter-spacing:0.25px">February</span></div></div>
<div class="b" style="left:281px;top:256px;width:60px;height:20px;overflow:hidden;"><div class="t" style="right:2.2px;top:6.0px;font-size:12.7px;color:#1e1e1e;letter-spacing:-0.3px;">1441</div></div>
<div class="b" style="left:25.5px;top:276px;width:317.5px;height:19px;background:#d9e1f2;"></div>
<div class="b" style="left:25.5px;top:276px;width:317.5px;height:1px;background:#8ea9db;"></div>
<div class="b" style="left:25.5px;top:276px;width:62.5px;height:19px;overflow:hidden;"><div class="t" style="left:2.6px;top:6.0px;font-size:12.7px;color:#1e1e1e;">Forecast 1</div></div>
<div class="b" style="left:88px;top:276px;width:62.5px;height:19px;overflow:hidden;"><div class="t" style="left:2.6px;top:6.0px;font-size:12.7px;color:#1e1e1e;"><span style="margin-right:1.5px">|</span>Jon Snow</div></div>
<div class="b" style="left:150.5px;top:276px;width:62.0px;height:19px;overflow:hidden;"><div class="t" style="left:2.6px;top:6.0px;font-size:12.7px;color:#1e1e1e;"><span style="margin-right:1.5px">|</span>Version 1</div></div>
<div class="b" style="left:212.5px;top:276px;width:68.5px;height:19px;overflow:hidden;"><div class="t" style="left:2.6px;top:6.0px;font-size:12.7px;color:#1e1e1e;"><span style="letter-spacing:0.25px">March</span></div></div>
<div class="b" style="left:281px;top:276px;width:60px;height:19px;overflow:hidden;"><div class="t" style="right:2.2px;top:6.0px;font-size:12.7px;color:#1e1e1e;letter-spacing:-0.3px;">2320</div></div>
<div class="b" style="left:25.5px;top:295px;width:317.5px;height:20px;background:#ffffff;"></div>
<div class="b" style="left:212px;top:295px;width:1px;height:20px;background:#dadada;"></div>
<div class="b" style="left:281px;top:295px;width:1px;height:20px;background:#dadada;"></div>
<div class="b" style="left:25.5px;top:295px;width:317.5px;height:1px;background:#8ea9db;"></div>
<div class="b" style="left:25.5px;top:295px;width:62.5px;height:20px;overflow:hidden;"><div class="t" style="left:2.6px;top:6.0px;font-size:12.7px;color:#1e1e1e;">Forecast 1</div></div>
<div class="b" style="left:88px;top:295px;width:62.5px;height:20px;overflow:hidden;"><div class="t" style="left:2.6px;top:6.0px;font-size:12.7px;color:#1e1e1e;"><span style="margin-right:1.5px">|</span>Jon Snow</div></div>
<div class="b" style="left:150.5px;top:295px;width:62.0px;height:20px;overflow:hidden;"><div class="t" style="left:2.6px;top:6.0px;font-size:12.7px;color:#1e1e1e;"><span style="margin-right:1.5px">|</span>Version 1</div></div>
<div class="b" style="left:212.5px;top:295px;width:68.5px;height:20px;overflow:hidden;"><div class="t" style="left:2.6px;top:6.0px;font-size:12.7px;color:#1e1e1e;"><span style="letter-spacing:0.25px">April</span></div></div>
<div class="b" style="left:281px;top:295px;width:60px;height:20px;overflow:hidden;"><div class="t" style="right:2.2px;top:6.0px;font-size:12.7px;color:#1e1e1e;letter-spacing:-0.3px;">624</div></div>
<div class="b" style="left:25.5px;top:315px;width:317.5px;height:19px;background:#d9e1f2;"></div>
<div class="b" style="left:25.5px;top:315px;width:317.5px;height:1px;background:#8ea9db;"></div>
<div class="b" style="left:25.5px;top:315px;width:62.5px;height:19px;overflow:hidden;"><div class="t" style="left:2.6px;top:6.0px;font-size:12.7px;color:#1e1e1e;">Forecast 1</div></div>
<div class="b" style="left:88px;top:315px;width:62.5px;height:19px;overflow:hidden;"><div class="t" style="left:2.6px;top:6.0px;font-size:12.7px;color:#1e1e1e;"><span style="margin-right:1.5px">|</span>Jon Snow</div></div>
<div class="b" style="left:150.5px;top:315px;width:62.0px;height:19px;overflow:hidden;"><div class="t" style="left:2.6px;top:6.0px;font-size:12.7px;color:#1e1e1e;"><span style="margin-right:1.5px">|</span>Version 1</div></div>
<div class="b" style="left:212.5px;top:315px;width:68.5px;height:19px;overflow:hidden;"><div class="t" style="left:2.6px;top:6.0px;font-size:12.7px;color:#1e1e1e;"><span style="letter-spacing:0.25px">May</span></div></div>
<div class="b" style="left:281px;top:315px;width:60px;height:19px;overflow:hidden;"><div class="t" style="right:2.2px;top:6.0px;font-size:12.7px;color:#1e1e1e;letter-spacing:-0.3px;">4108</div></div>
<div class="b" style="left:25.5px;top:334px;width:317.5px;height:19px;background:#ffffff;"></div>
<div class="b" style="left:212px;top:334px;width:1px;height:19px;background:#dadada;"></div>
<div class="b" style="left:281px;top:334px;width:1px;height:19px;background:#dadada;"></div>
<div class="b" style="left:25.5px;top:334px;width:317.5px;height:1px;background:#8ea9db;"></div>
<div class="b" style="left:25.5px;top:334px;width:62.5px;height:19px;overflow:hidden;"><div class="t" style="left:2.6px;top:6.0px;font-size:12.7px;color:#1e1e1e;">Forecast 1</div></div>
<div class="b" style="left:88px;top:334px;width:62.5px;height:19px;overflow:hidden;"><div class="t" style="left:2.6px;top:6.0px;font-size:12.7px;color:#1e1e1e;"><span style="margin-right:1.5px">|</span>Jon Snow</div></div>
<div class="b" style="left:150.5px;top:334px;width:62.0px;height:19px;overflow:hidden;"><div class="t" style="left:2.6px;top:6.0px;font-size:12.7px;color:#1e1e1e;"><span style="margin-right:1.5px">|</span>Version 1</div></div>
<div class="b" style="left:212.5px;top:334px;width:68.5px;height:19px;overflow:hidden;"><div class="t" style="left:2.6px;top:6.0px;font-size:12.7px;color:#1e1e1e;"><span style="letter-spacing:0.25px">June</span></div></div>
<div class="b" style="left:281px;top:334px;width:60px;height:19px;overflow:hidden;"><div class="t" style="right:2.2px;top:6.0px;font-size:12.7px;color:#1e1e1e;letter-spacing:-0.3px;">158</div></div>
<div class="b" style="left:25.5px;top:353px;width:317.5px;height:20px;background:#d9e1f2;"></div>
<div class="b" style="left:25.5px;top:353px;width:317.5px;height:1px;background:#8ea9db;"></div>
<div class="b" style="left:25.5px;top:353px;width:62.5px;height:20px;overflow:hidden;"><div class="t" style="left:2.6px;top:6.0px;font-size:12.7px;color:#1e1e1e;">Forecast 1</div></div>
<div class="b" style="left:88px;top:353px;width:62.5px;height:20px;overflow:hidden;"><div class="t" style="left:2.6px;top:6.0px;font-size:12.7px;color:#1e1e1e;"><span style="margin-right:1.5px">|</span>Jon Snow</div></div>
<div class="b" style="left:150.5px;top:353px;width:62.0px;height:20px;overflow:hidden;"><div class="t" style="left:2.6px;top:6.0px;font-size:12.7px;color:#1e1e1e;"><span style="margin-right:1.5px">|</span>Version 1</div></div>
<div class="b" style="left:212.5px;top:353px;width:68.5px;height:20px;overflow:hidden;"><div class="t" style="left:2.6px;top:6.0px;font-size:12.7px;color:#1e1e1e;"><span style="letter-spacing:0.25px">July</span></div></div>
<div class="b" style="left:281px;top:353px;width:60px;height:20px;overflow:hidden;"><div class="t" style="right:2.2px;top:6.0px;font-size:12.7px;color:#1e1e1e;letter-spacing:-0.3px;">2469</div></div>
<div class="b" style="left:25.5px;top:373px;width:317.5px;height:19px;background:#ffffff;"></div>
<div class="b" style="left:212px;top:373px;width:1px;height:19px;background:#dadada;"></div>
<div class="b" style="left:281px;top:373px;width:1px;height:19px;background:#dadada;"></div>
<div class="b" style="left:25.5px;top:373px;width:317.5px;height:1px;background:#8ea9db;"></div>
<div class="b" style="left:25.5px;top:373px;width:62.5px;height:19px;overflow:hidden;"><div class="t" style="left:2.6px;top:6.0px;font-size:12.7px;color:#1e1e1e;">Forecast 1</div></div>
<div class="b" style="left:88px;top:373px;width:62.5px;height:19px;overflow:hidden;"><div class="t" style="left:2.6px;top:6.0px;font-size:12.7px;color:#1e1e1e;"><span style="margin-right:1.5px">|</span>Jon Snow</div></div>
<div class="b" style="left:150.5px;top:373px;width:62.0px;height:19px;overflow:hidden;"><div class="t" style="left:2.6px;top:6.0px;font-size:12.7px;color:#1e1e1e;"><span style="margin-right:1.5px">|</span>Version 1</div></div>
<div class="b" style="left:212.5px;top:373px;width:68.5px;height:19px;overflow:hidden;"><div class="t" style="left:2.6px;top:6.0px;font-size:12.7px;color:#1e1e1e;"><span style="letter-spacing:0.25px">August</span></div></div>
<div class="b" style="left:281px;top:373px;width:60px;height:19px;overflow:hidden;"><div class="t" style="right:2.2px;top:6.0px;font-size:12.7px;color:#1e1e1e;letter-spacing:-0.3px;">4631</div></div>
<div class="b" style="left:25.5px;top:392px;width:317.5px;height:20px;background:#d9e1f2;"></div>
<div class="b" style="left:25.5px;top:392px;width:317.5px;height:1px;background:#8ea9db;"></div>
<div class="b" style="left:25.5px;top:392px;width:62.5px;height:20px;overflow:hidden;"><div class="t" style="left:2.6px;top:6.0px;font-size:12.7px;color:#1e1e1e;">Forecast 1</div></div>
<div class="b" style="left:88px;top:392px;width:62.5px;height:20px;overflow:hidden;"><div class="t" style="left:2.6px;top:6.0px;font-size:12.7px;color:#1e1e1e;"><span style="margin-right:1.5px">|</span>Jon Snow</div></div>
<div class="b" style="left:150.5px;top:392px;width:62.0px;height:20px;overflow:hidden;"><div class="t" style="left:2.6px;top:6.0px;font-size:12.7px;color:#1e1e1e;"><span style="margin-right:1.5px">|</span>Version 1</div></div>
<div class="b" style="left:212.5px;top:392px;width:68.5px;height:20px;overflow:hidden;"><div class="t" style="left:2.6px;top:6.0px;font-size:12.7px;color:#1e1e1e;"><span style="letter-spacing:0.25px">September</span></div></div>
<div class="b" style="left:281px;top:392px;width:60px;height:20px;overflow:hidden;"><div class="t" style="right:2.2px;top:6.0px;font-size:12.7px;color:#1e1e1e;letter-spacing:-0.3px;">238</div></div>
<div class="b" style="left:25.5px;top:412px;width:317.5px;height:19px;background:#ffffff;"></div>
<div class="b" style="left:212px;top:412px;width:1px;height:19px;background:#dadada;"></div>
<div class="b" style="left:281px;top:412px;width:1px;height:19px;background:#dadada;"></div>
<div class="b" style="left:25.5px;top:412px;width:317.5px;height:1px;background:#8ea9db;"></div>
<div class="b" style="left:25.5px;top:412px;width:62.5px;height:19px;overflow:hidden;"><div class="t" style="left:2.6px;top:6.0px;font-size:12.7px;color:#1e1e1e;">Forecast 1</div></div>
<div class="b" style="left:88px;top:412px;width:62.5px;height:19px;overflow:hidden;"><div class="t" style="left:2.6px;top:6.0px;font-size:12.7px;color:#1e1e1e;"><span style="margin-right:1.5px">|</span>Jon Snow</div></div>
<div class="b" style="left:150.5px;top:412px;width:62.0px;height:19px;overflow:hidden;"><div class="t" style="left:2.6px;top:6.0px;font-size:12.7px;color:#1e1e1e;"><span style="margin-right:1.5px">|</span>Version 1</div></div>
<div class="b" style="left:212.5px;top:412px;width:68.5px;height:19px;overflow:hidden;"><div class="t" style="left:2.6px;top:6.0px;font-size:12.7px;color:#1e1e1e;"><span style="letter-spacing:0.25px">October</span></div></div>
<div class="b" style="left:281px;top:412px;width:60px;height:19px;overflow:hidden;"><div class="t" style="right:2.2px;top:6.0px;font-size:12.7px;color:#1e1e1e;letter-spacing:-0.3px;">502</div></div>
<div class="b" style="left:25.5px;top:431px;width:317.5px;height:20px;background:#d9e1f2;"></div>
<div class="b" style="left:25.5px;top:431px;width:317.5px;height:1px;background:#8ea9db;"></div>
<div class="b" style="left:25.5px;top:431px;width:62.5px;height:20px;overflow:hidden;"><div class="t" style="left:2.6px;top:6.0px;font-size:12.7px;color:#1e1e1e;">Forecast 1</div></div>
<div class="b" style="left:88px;top:431px;width:62.5px;height:20px;overflow:hidden;"><div class="t" style="left:2.6px;top:6.0px;font-size:12.7px;color:#1e1e1e;"><span style="margin-right:1.5px">|</span>Jon Snow</div></div>
<div class="b" style="left:150.5px;top:431px;width:62.0px;height:20px;overflow:hidden;"><div class="t" style="left:2.6px;top:6.0px;font-size:12.7px;color:#1e1e1e;"><span style="margin-right:1.5px">|</span>Version 1</div></div>
<div class="b" style="left:212.5px;top:431px;width:68.5px;height:20px;overflow:hidden;"><div class="t" style="left:2.6px;top:6.0px;font-size:12.7px;color:#1e1e1e;"><span style="letter-spacing:0.25px">November</span></div></div>
<div class="b" style="left:281px;top:431px;width:60px;height:20px;overflow:hidden;"><div class="t" style="right:2.2px;top:6.0px;font-size:12.7px;color:#1e1e1e;letter-spacing:-0.3px;">3162</div></div>
<div class="b" style="left:25.5px;top:451px;width:317.5px;height:19px;background:#ffffff;"></div>
<div class="b" style="left:212px;top:451px;width:1px;height:19px;background:#dadada;"></div>
<div class="b" style="left:281px;top:451px;width:1px;height:19px;background:#dadada;"></div>
<div class="b" style="left:25.5px;top:451px;width:317.5px;height:1px;background:#8ea9db;"></div>
<div class="b" style="left:25.5px;top:451px;width:62.5px;height:19px;overflow:hidden;"><div class="t" style="left:2.6px;top:6.0px;font-size:12.7px;color:#1e1e1e;">Forecast 1</div></div>
<div class="b" style="left:88px;top:451px;width:62.5px;height:19px;overflow:hidden;"><div class="t" style="left:2.6px;top:6.0px;font-size:12.7px;color:#1e1e1e;"><span style="margin-right:1.5px">|</span>Jon Snow</div></div>
<div class="b" style="left:150.5px;top:451px;width:62.0px;height:19px;overflow:hidden;"><div class="t" style="left:2.6px;top:6.0px;font-size:12.7px;color:#1e1e1e;"><span style="margin-right:1.5px">|</span>Version 1</div></div>
<div class="b" style="left:212.5px;top:451px;width:68.5px;height:19px;overflow:hidden;"><div class="t" style="left:2.6px;top:6.0px;font-size:12.7px;color:#1e1e1e;"><span style="letter-spacing:0.25px">December</span></div></div>
<div class="b" style="left:281px;top:451px;width:60px;height:19px;overflow:hidden;"><div class="t" style="right:2.2px;top:6.0px;font-size:12.7px;color:#1e1e1e;letter-spacing:-0.3px;">1825</div></div>
<div class="b" style="left:25.5px;top:470px;width:317.5px;height:19px;background:#d9e1f2;"></div>
<div class="b" style="left:25.5px;top:470px;width:317.5px;height:1px;background:#8ea9db;"></div>
<div class="b" style="left:25.5px;top:470px;width:62.5px;height:19px;overflow:hidden;"><div class="t" style="left:2.6px;top:6.0px;font-size:12.7px;color:#1e1e1e;">Forecast 2</div></div>
<div class="b" style="left:88px;top:470px;width:124.5px;height:19px;overflow:hidden;"><div class="t" style="left:2.6px;top:6.0px;font-size:12.7px;color:#1e1e1e;"><span style="margin-right:1.5px">|</span><span style="letter-spacing:0.38px">Daenerys Targaryen</span></div></div>
<div class="b" style="left:212.5px;top:470px;width:68.5px;height:19px;overflow:hidden;"><div class="t" style="left:2.6px;top:6.0px;font-size:12.7px;color:#1e1e1e;"><span style="letter-spacing:0.25px">January</span></div></div>
<div class="b" style="left:281px;top:470px;width:60px;height:19px;overflow:hidden;"><div class="t" style="right:2.2px;top:6.0px;font-size:12.7px;color:#1e1e1e;letter-spacing:-0.3px;">990</div></div>
<div class="b" style="left:25.5px;top:489px;width:317.5px;height:20px;background:#ffffff;"></div>
<div class="b" style="left:212px;top:489px;width:1px;height:20px;background:#dadada;"></div>
<div class="b" style="left:281px;top:489px;width:1px;height:20px;background:#dadada;"></div>
<div class="b" style="left:25.5px;top:489px;width:317.5px;height:1px;background:#8ea9db;"></div>
<div class="b" style="left:25.5px;top:489px;width:62.5px;height:20px;overflow:hidden;"><div class="t" style="left:2.6px;top:6.0px;font-size:12.7px;color:#1e1e1e;">Forecast 2</div></div>
<div class="b" style="left:88px;top:489px;width:124.5px;height:20px;overflow:hidden;"><div class="t" style="left:2.6px;top:6.0px;font-size:12.7px;color:#1e1e1e;"><span style="margin-right:1.5px">|</span><span style="letter-spacing:0.38px">Daenerys Targaryen</span></div></div>
<div class="b" style="left:212.5px;top:489px;width:68.5px;height:20px;overflow:hidden;"><div class="t" style="left:2.6px;top:6.0px;font-size:12.7px;color:#1e1e1e;"><span style="letter-spacing:0.25px">February</span></div></div>
<div class="b" style="left:281px;top:489px;width:60px;height:20px;overflow:hidden;"><div class="t" style="right:2.2px;top:6.0px;font-size:12.7px;color:#1e1e1e;letter-spacing:-0.3px;">808</div></div>
<div class="b" style="left:25.5px;top:509px;width:317.5px;height:19px;background:#d9e1f2;"></div>
<div class="b" style="left:25.5px;top:509px;width:317.5px;height:1px;background:#8ea9db;"></div>
<div class="b" style="left:25.5px;top:509px;width:62.5px;height:19px;overflow:hidden;"><div class="t" style="left:2.6px;top:6.0px;font-size:12.7px;color:#1e1e1e;">Forecast 2</div></div>
<div class="b" style="left:88px;top:509px;width:124.5px;height:19px;overflow:hidden;"><div class="t" style="left:2.6px;top:6.0px;font-size:12.7px;color:#1e1e1e;"><span style="margin-right:1.5px">|</span><span style="letter-spacing:0.38px">Daenerys Targaryen</span></div></div>
<div class="b" style="left:212.5px;top:509px;width:68.5px;height:19px;overflow:hidden;"><div class="t" style="left:2.6px;top:6.0px;font-size:12.7px;color:#1e1e1e;"><span style="letter-spacing:0.25px">March</span></div></div>
<div class="b" style="left:281px;top:509px;width:60px;height:19px;overflow:hidden;"><div class="t" style="right:2.2px;top:6.0px;font-size:12.7px;color:#1e1e1e;letter-spacing:-0.3px;">1281</div></div>
<div class="b" style="left:25.5px;top:528px;width:317.5px;height:20px;background:#ffffff;"></div>
<div class="b" style="left:212px;top:528px;width:1px;height:20px;background:#dadada;"></div>
<div class="b" style="left:281px;top:528px;width:1px;height:20px;background:#dadada;"></div>
<div class="b" style="left:25.5px;top:528px;width:317.5px;height:1px;background:#8ea9db;"></div>
<div class="b" style="left:25.5px;top:528px;width:62.5px;height:20px;overflow:hidden;"><div class="t" style="left:2.6px;top:6.0px;font-size:12.7px;color:#1e1e1e;">Forecast 2</div></div>
<div class="b" style="left:88px;top:528px;width:124.5px;height:20px;overflow:hidden;"><div class="t" style="left:2.6px;top:6.0px;font-size:12.7px;color:#1e1e1e;"><span style="margin-right:1.5px">|</span><span style="letter-spacing:0.38px">Daenerys Targaryen</span></div></div>
<div class="b" style="left:212.5px;top:528px;width:68.5px;height:20px;overflow:hidden;"><div class="t" style="left:2.6px;top:6.0px;font-size:12.7px;color:#1e1e1e;"><span style="letter-spacing:0.25px">April</span></div></div>
<div class="b" style="left:281px;top:528px;width:60px;height:20px;overflow:hidden;"><div class="t" style="right:2.2px;top:6.0px;font-size:12.7px;color:#1e1e1e;letter-spacing:-0.3px;">1755</div></div>
<div class="b" style="left:25.5px;top:548px;width:317.5px;height:19px;background:#d9e1f2;"></div>
<div class="b" style="left:25.5px;top:548px;width:317.5px;height:1px;background:#8ea9db;"></div>
<div class="b" style="left:25.5px;top:548px;width:62.5px;height:19px;overflow:hidden;"><div class="t" style="left:2.6px;top:6.0px;font-size:12.7px;color:#1e1e1e;">Forecast 2</div></div>
<div class="b" style="left:88px;top:548px;width:124.5px;height:19px;overflow:hidden;"><div class="t" style="left:2.6px;top:6.0px;font-size:12.7px;color:#1e1e1e;"><span style="margin-right:1.5px">|</span><span style="letter-spacing:0.38px">Daenerys Targaryen</span></div></div>
<div class="b" style="left:212.5px;top:548px;width:68.5px;height:19px;overflow:hidden;"><div class="t" style="left:2.6px;top:6.0px;font-size:12.7px;color:#1e1e1e;"><span style="letter-spacing:0.25px">May</span></div></div>
<div class="b" style="left:281px;top:548px;width:60px;height:19px;overflow:hidden;"><div class="t" style="right:2.2px;top:6.0px;font-size:12.7px;color:#1e1e1e;letter-spacing:-0.3px;">873</div></div>
<div class="b" style="left:25.5px;top:567px;width:317.5px;height:19px;background:#ffffff;"></div>
<div class="b" style="left:212px;top:567px;width:1px;height:19px;background:#dadada;"></div>
<div class="b" style="left:281px;top:567px;width:1px;height:19px;background:#dadada;"></div>
<div class="b" style="left:25.5px;top:567px;width:317.5px;height:1px;background:#8ea9db;"></div>
<div class="b" style="left:25.5px;top:567px;width:62.5px;height:19px;overflow:hidden;"><div class="t" style="left:2.6px;top:6.0px;font-size:12.7px;color:#1e1e1e;">Forecast 2</div></div>
<div class="b" style="left:88px;top:567px;width:124.5px;height:19px;overflow:hidden;"><div class="t" style="left:2.6px;top:6.0px;font-size:12.7px;color:#1e1e1e;"><span style="margin-right:1.5px">|</span><span style="letter-spacing:0.38px">Daenerys Targaryen</span></div></div>
<div class="b" style="left:212.5px;top:567px;width:68.5px;height:19px;overflow:hidden;"><div class="t" style="left:2.6px;top:6.0px;font-size:12.7px;color:#1e1e1e;"><span style="letter-spacing:0.25px">June</span></div></div>
<div class="b" style="left:281px;top:567px;width:60px;height:19px;overflow:hidden;"><div class="t" style="right:2.2px;top:6.0px;font-size:12.7px;color:#1e1e1e;letter-spacing:-0.3px;">3866</div></div>
<div class="b" style="left:25.5px;top:586px;width:317.5px;height:20px;background:#d9e1f2;"></div>
<div class="b" style="left:25.5px;top:586px;width:317.5px;height:1px;background:#8ea9db;"></div>
<div class="b" style="left:25.5px;top:586px;width:62.5px;height:20px;overflow:hidden;"><div class="t" style="left:2.6px;top:6.0px;font-size:12.7px;color:#1e1e1e;">Forecast 2</div></div>
<div class="b" style="left:88px;top:586px;width:124.5px;height:20px;overflow:hidden;"><div class="t" style="left:2.6px;top:6.0px;font-size:12.7px;color:#1e1e1e;"><span style="margin-right:1.5px">|</span><span style="letter-spacing:0.38px">Daenerys Targaryen</span></div></div>
<div class="b" style="left:212.5px;top:586px;width:68.5px;height:20px;overflow:hidden;"><div class="t" style="left:2.6px;top:6.0px;font-size:12.7px;color:#1e1e1e;"><span style="letter-spacing:0.25px">July</span></div></div>
<div class="b" style="left:281px;top:586px;width:60px;height:20px;overflow:hidden;"><div class="t" style="right:2.2px;top:6.0px;font-size:12.7px;color:#1e1e1e;letter-spacing:-0.3px;">2124</div></div>
<div class="b" style="left:25.5px;top:606px;width:317.5px;height:19px;background:#ffffff;"></div>
<div class="b" style="left:212px;top:606px;width:1px;height:19px;background:#dadada;"></div>
<div class="b" style="left:281px;top:606px;width:1px;height:19px;background:#dadada;"></div>
<div class="b" style="left:25.5px;top:606px;width:317.5px;height:1px;background:#8ea9db;"></div>
<div class="b" style="left:25.5px;top:606px;width:62.5px;height:19px;overflow:hidden;"><div class="t" style="left:2.6px;top:6.0px;font-size:12.7px;color:#1e1e1e;">Forecast 2</div></div>
<div class="b" style="left:88px;top:606px;width:124.5px;height:19px;overflow:hidden;"><div class="t" style="left:2.6px;top:6.0px;font-size:12.7px;color:#1e1e1e;"><span style="margin-right:1.5px">|</span><span style="letter-spacing:0.38px">Daenerys Targaryen</span></div></div>
<div class="b" style="left:212.5px;top:606px;width:68.5px;height:19px;overflow:hidden;"><div class="t" style="left:2.6px;top:6.0px;font-size:12.7px;color:#1e1e1e;"><span style="letter-spacing:0.25px">August</span></div></div>
<div class="b" style="left:281px;top:606px;width:60px;height:19px;overflow:hidden;"><div class="t" style="right:2.2px;top:6.0px;font-size:12.7px;color:#1e1e1e;letter-spacing:-0.3px;">2486</div></div>
<div class="b" style="left:25.5px;top:625px;width:317.5px;height:20px;background:#d9e1f2;"></div>
<div class="b" style="left:25.5px;top:625px;width:317.5px;height:1px;background:#8ea9db;"></div>
<div class="b" style="left:25.5px;top:625px;width:62.5px;height:20px;overflow:hidden;"><div class="t" style="left:2.6px;top:6.0px;font-size:12.7px;color:#1e1e1e;">Forecast 2</div></div>
<div class="b" style="left:88px;top:625px;width:124.5px;height:20px;overflow:hidden;"><div class="t" style="left:2.6px;top:6.0px;font-size:12.7px;color:#1e1e1e;"><span style="margin-right:1.5px">|</span><span style="letter-spacing:0.38px">Daenerys Targaryen</span></div></div>
<div class="b" style="left:212.5px;top:625px;width:68.5px;height:20px;overflow:hidden;"><div class="t" style="left:2.6px;top:6.0px;font-size:12.7px;color:#1e1e1e;"><span style="letter-spacing:0.25px">September</span></div></div>
<div class="b" style="left:281px;top:625px;width:60px;height:20px;overflow:hidden;"><div class="t" style="right:2.2px;top:6.0px;font-size:12.7px;color:#1e1e1e;letter-spacing:-0.3px;">3977</div></div>
<div class="b" style="left:342px;top:218px;width:1px;height:433px;background:#8ea9db;"></div>
<div class="b" style="left:25.5px;top:645px;width:317.5px;height:1px;background:#8ea9db;"></div>
<div class="b" style="left:26px;top:237px;width:62px;height:414px;background:rgba(0,0,0,0.165);"></div>
<div class="t" style="left:2px;top:224.2px;width:23px;text-align:center;font-size:12px;color:#2f7552;">1</div>
<div class="t" style="left:2px;top:243.6px;width:23px;text-align:center;font-size:12px;color:#2f7552;">2</div>
<div class="t" style="left:2px;top:263.0px;width:23px;text-align:center;font-size:12px;color:#2f7552;">3</div>
<div class="t" style="left:2px;top:282.4px;width:23px;text-align:center;font-size:12px;color:#2f7552;">4</div>
<div class="t" style="left:2px;top:301.8px;width:23px;text-align:center;font-size:12px;color:#2f7552;">5</div>
<div class="t" style="left:2px;top:321.2px;width:23px;text-align:center;font-size:12px;color:#2f7552;">6</div>
<div class="t" style="left:2px;top:340.7px;width:23px;text-align:center;font-size:12px;color:#2f7552;">7</div>
<div class="t" style="left:2px;top:360.1px;width:23px;text-align:center;font-size:12px;color:#2f7552;">8</div>
<div class="t" style="left:2px;top:379.5px;width:23px;text-align:center;font-size:12px;color:#2f7552;">9</div>
<div class="t" style="left:2px;top:398.9px;width:23px;text-align:center;font-size:12px;color:#2f7552;">10</div>
<div class="t" style="left:2px;top:418.3px;width:23px;text-align:center;font-size:12px;color:#2f7552;">11</div>
<div class="t" style="left:2px;top:437.7px;width:23px;text-align:center;font-size:12px;color:#2f7552;">12</div>
<div class="t" style="left:2px;top:457.1px;width:23px;text-align:center;font-size:12px;color:#2f7552;">13</div>
<div class="t" style="left:2px;top:476.5px;width:23px;text-align:center;font-size:12px;color:#2f7552;">14</div>
<div class="t" style="left:2px;top:495.9px;width:23px;text-align:center;font-size:12px;color:#2f7552;">15</div>
<div class="t" style="left:2px;top:515.4px;width:23px;text-align:center;font-size:12px;color:#2f7552;">16</div>
<div class="t" style="left:2px;top:534.8px;width:23px;text-align:center;font-size:12px;color:#2f7552;">17</div>
<div class="t" style="left:2px;top:554.2px;width:23px;text-align:center;font-size:12px;color:#2f7552;">18</div>
<div class="t" style="left:2px;top:573.6px;width:23px;text-align:center;font-size:12px;color:#2f7552;">19</div>
<div class="t" style="left:2px;top:593.0px;width:23px;text-align:center;font-size:12px;color:#2f7552;">20</div>
<div class="t" style="left:2px;top:612.4px;width:23px;text-align:center;font-size:12px;color:#2f7552;">21</div>
<div class="t" style="left:2px;top:631.8px;width:23px;text-align:center;font-size:12px;color:#2f7552;">22</div>
<div class="b" style="left:24px;top:216.5px;width:2px;height:435px;background:#217346;"></div>
<div class="b" style="left:24px;top:216.5px;width:65px;height:2px;background:#217346;"></div>
<div class="b" style="left:87px;top:216.5px;width:2px;height:435px;background:#217346;"></div>
<div class="b" style="left:87px;top:216px;width:4px;height:5px;background:#217346;"></div>
<div class="b" style="left:519.5px;top:237px;width:492.0px;height:400.5px;background:#f0f0f0;box-shadow:0 0 0 1px #4392dc, 2px 3px 9px rgba(0,0,0,0.26);"></div>
<div class="b" style="left:519.5px;top:237px;width:492.0px;height:30px;background:#0078d7;"></div>
<div class="t " style="left: 529px; top: 247.44px; font-size: 12px; color: rgb(255, 255, 255); letter-spacing: -0.278px;">Convert Text to Columns Wizard - Step 2 of 3</div>
<div class="t " style="left:941.00px;top:247.02px;font-size:12.5px;color:#fff;">?</div>
<svg class="s" style="left:983px;top:246px;" width="12" height="12" viewBox="0 0 12 12"><path d="M1 1 L11 11 M11 1 L1 11" stroke="#fff" stroke-width="1.2"></path></svg>
<div class="t " style="left: 526.3px; top: 275.63px; font-size: 11.3px; color: rgb(27, 27, 27); letter-spacing: -0.067px;">This screen lets you set the delimiters your data contains.  You can see how your text is affected</div>
<div class="t " style="left: 526.3px; top: 288.23px; font-size: 11.3px; color: rgb(27, 27, 27); letter-spacing: 0.091px;">in the preview below.</div>
<div class="b" style="left:527px;top:316px;width:103px;height:110px;border:1px solid #d5d5d5;"></div>
<div class="b" style="left:531px;top:312px;width:52px;height:12px;background:#f0f0f0;"></div>
<div class="t " style="left: 532.5px; top: 311.73px; font-size: 11.3px; color: rgb(27, 27, 27); letter-spacing: -0.158px;">Delimiters</div>
<div class="b" style="left:535px;top:330px;width:11px;height:11px;border:1px solid #333;background:#fff;"></div>
<div class="t " style="left: 552px; top: 332.43px; font-size: 11.3px; color: rgb(27, 27, 27); letter-spacing: -0.117px;"><u>T</u>ab</div>
<div class="b" style="left:535px;top:349px;width:11px;height:11px;border:1px solid #333;background:#fff;"></div>
<div class="t " style="left: 552px; top: 351.43px; font-size: 11.3px; color: rgb(27, 27, 27); letter-spacing: -0.248px;">Se<u>m</u>icolon</div>
<div class="b" style="left:535px;top:367px;width:11px;height:11px;border:1px solid #333;background:#fff;"></div>
<div class="t " style="left: 552px; top: 369.43px; font-size: 11.3px; color: rgb(27, 27, 27); letter-spacing: -0.641px;"><u>C</u>omma</div>
<div class="b" style="left:535px;top:386px;width:11px;height:11px;border:1px solid #333;background:#fff;"></div>
<div class="t " style="left: 552px; top: 388.43px; font-size: 11.3px; color: rgb(27, 27, 27); letter-spacing: -0.512px;"><u>S</u>pace</div>
<div class="b" style="left:535px;top:405px;width:11px;height:11px;border:1px solid #333;background:#fff;"></div>
<div class="t " style="left: 552px; top: 407.43px; font-size: 11.3px; color: rgb(27, 27, 27); letter-spacing: -0.001px;"><u>O</u>ther:</div>
<svg class="s" style="left:536px;top:406px;" width="12" height="12" viewBox="0 0 12 12"><path d="M1.5 6 L4.5 9.5 L10.5 2" stroke="#222" stroke-width="1.3" fill="none"></path></svg>
<div class="b" style="left:595px;top:403px;width:28px;height:18px;border:1px solid #adadad;background:#fff;"></div>
<div class="b" style="left:599.5px;top:407px;width:1px;height:11px;background:#555;"></div>
<div class="b" style="left:642px;top:347.5px;width:11px;height:11px;border:1px solid #333;background:#fff;"></div>
<div class="t " style="left: 659.2px; top: 348.93px; font-size: 11.3px; color: rgb(27, 27, 27); letter-spacing: -0.162px;">T<u>r</u>eat consecutive delimiters as one</div>
<div class="t " style="left: 642px; top: 377.53px; font-size: 11.3px; color: rgb(27, 27, 27); letter-spacing: 0.002px;">Text <u>q</u>ualifier:</div>
<div class="b" style="left:718px;top:372px;width:114px;height:19px;border:1px solid #adadad;background:#fff;"></div>
<div class="b" style="left:817px;top:373px;width:16px;height:19px;border-left:1px solid #c8c8c8;background:#e5e5e5;"></div>
<svg class="s" style="left:820px;top:379px;" width="10" height="6" viewBox="0 0 10 6"><path d="M1 1 L5 5 L9 1" stroke="#444" stroke-width="1.2" fill="none"></path></svg>
<div class="t " style="left:722.00px;top:376.33px;font-size:11.3px;color:#1b1b1b;">"</div>
<div class="b" style="left:526.5px;top:459px;width:476.5px;height:135px;border:1px solid #d5d5d5;"></div>
<div class="b" style="left:531px;top:456px;width:70px;height:12px;background:#f0f0f0;"></div>
<div class="t " style="left: 532.3px; top: 455.93px; font-size: 11.3px; color: rgb(27, 27, 27); letter-spacing: -0.07px;">Data <u>p</u>review</div>
<div class="b" style="left:535px;top:500px;width:445px;height:74.5px;background:#fff;"></div>
<div class="b" style="left:535px;top:500px;width:445px;height:2px;background:#5a5a5a;"></div>
<div class="b" style="left:535px;top:500px;width:1px;height:74.5px;background:#6a6a6a;"></div>
<div class="b" style="left:979px;top:500px;width:1px;height:74.5px;background:#6a6a6a;"></div>
<div class="b" style="left:610px;top:501px;width:1px;height:73.5px;background:#111;"></div>
<div class="b" style="left:671px;top:501px;width:1px;height:73.5px;background:#111;"></div>
<div class="t " style="left:535.70px;top:506.63px;font-size:11.3px;color:#3c3c3c;font-family:'Liberation Mono', monospace;">Row</div>
<div class="t " style="left:535.70px;top:520.13px;font-size:11.3px;color:#3c3c3c;font-family:'Liberation Mono', monospace;">Forecast 1 Jon Snow Version 1</div>
<div class="t " style="left:535.70px;top:533.63px;font-size:11.3px;color:#3c3c3c;font-family:'Liberation Mono', monospace;">Forecast 1 Jon Snow Version 1</div>
<div class="t " style="left:535.70px;top:547.13px;font-size:11.3px;color:#3c3c3c;font-family:'Liberation Mono', monospace;">Forecast 1 Jon Snow Version 1</div>
<div class="t " style="left:535.70px;top:560.63px;font-size:11.3px;color:#3c3c3c;font-family:'Liberation Mono', monospace;">Forecast 1 Jon Snow Version 1</div>
<svg class="s" style="left:981px;top:503px;" width="15" height="9" viewBox="0 0 15 9"><path d="M3 7 L7.5 2.5 L12 7" stroke="#606060" stroke-width="1.5" fill="none"></path></svg>
<div class="b" style="left:981.5px;top:517px;width:14px;height:16px;background:#cdcdcd;"></div>
<svg class="s" style="left:981px;top:560px;" width="15" height="9" viewBox="0 0 15 9"><path d="M3 2 L7.5 6.5 L12 2" stroke="#606060" stroke-width="1.5" fill="none"></path></svg>
<svg class="s" style="left:539px;top:577px;" width="9" height="12" viewBox="0 0 9 12"><path d="M7 1.5 L2.5 6 L7 10.5" stroke="#a0a0a0" stroke-width="1.3" fill="none"></path></svg>
<svg class="s" style="left:968px;top:577px;" width="9" height="12" viewBox="0 0 9 12"><path d="M2 1.5 L6.5 6 L2 10.5" stroke="#a0a0a0" stroke-width="1.3" fill="none"></path></svg>
<div class="b" style="left:688px;top:608px;width:70px;height:19.5px;border:1px solid #bdbdbd;background:#e1e1e1;"></div>
<div class="t" style="left: 688px; top: 613.97px; width: 72px; text-align: center; font-size: 11.3px; color: rgb(27, 27, 27); letter-spacing: -0.514px;">Cancel</div>
<div class="b" style="left:769.5px;top:608px;width:69.5px;height:19.5px;border:1px solid #bdbdbd;background:#e1e1e1;"></div>
<div class="t" style="left: 769.5px; top: 613.97px; width: 71.5px; text-align: center; font-size: 11.3px; color: rgb(27, 27, 27); letter-spacing: -0.278px;">&lt; <u>B</u>ack</div>
<div class="b" style="left:850.7px;top:608px;width:68.29999999999995px;height:17.5px;border:2px solid #0078d7;background:#e1e1e1;"></div>
<div class="t" style="left: 850.7px; top: 613.97px; width: 72.3px; text-align: center; font-size: 11.3px; color: rgb(27, 27, 27); letter-spacing: -0.297px;"><u>N</u>ext &gt;</div>
<div class="b" style="left:932.7px;top:608px;width:69.69999999999993px;height:19.5px;border:1px solid #bdbdbd;background:#e1e1e1;"></div>
<div class="t" style="left: 932.7px; top: 613.97px; width: 71.7px; text-align: center; font-size: 11.3px; color: rgb(27, 27, 27); letter-spacing: -0.328px;"><u>F</u>inish</div>
<svg class="s" style="left:682px;top:257px;" width="14" height="21" viewBox="0 0 14 21"><path d="M1 1 V16 L4.5 12.5 L7.5 19 L10 18 L7 11.5 H12 Z" fill="#fff" stroke="#111" stroke-width="1"></path></svg>
<svg class="s" style="left:0;top:0;filter:drop-shadow(1.5px 2.5px 2px rgba(0,0,0,0.4));" width="1024" height="651" viewBox="0 0 1024 651"><g fill="#2dbd6d"><rect x="108.70" y="192.00" width="8" height="8" transform="rotate(-8.4 112.70 196.00)"></rect><rect x="124.09" y="189.72" width="8" height="8" transform="rotate(-8.4 128.09 193.72)"></rect><rect x="139.48" y="187.43" width="8" height="8" transform="rotate(-8.4 143.48 191.43)"></rect><rect x="154.87" y="185.15" width="8" height="8" transform="rotate(-8.4 158.87 189.15)"></rect><rect x="170.26" y="182.86" width="8" height="8" transform="rotate(-8.4 174.26 186.86)"></rect><rect x="185.65" y="180.58" width="8" height="8" transform="rotate(-8.4 189.65 184.58)"></rect><rect x="201.04" y="178.30" width="8" height="8" transform="rotate(-8.4 205.04 182.30)"></rect><rect x="216.43" y="176.01" width="8" height="8" transform="rotate(-8.4 220.43 180.01)"></rect><rect x="231.82" y="173.73" width="8" height="8" transform="rotate(-8.4 235.82 177.73)"></rect><rect x="247.21" y="171.44" width="8" height="8" transform="rotate(-8.4 251.21 175.44)"></rect><rect x="262.60" y="169.16" width="8" height="8" transform="rotate(-8.4 266.60 173.16)"></rect><rect x="277.99" y="166.88" width="8" height="8" transform="rotate(-8.4 281.99 170.88)"></rect><rect x="293.38" y="164.59" width="8" height="8" transform="rotate(-8.4 297.38 168.59)"></rect><rect x="308.77" y="162.31" width="8" height="8" transform="rotate(-8.4 312.77 166.31)"></rect><rect x="324.16" y="160.02" width="8" height="8" transform="rotate(-8.4 328.16 164.02)"></rect><rect x="339.55" y="157.74" width="8" height="8" transform="rotate(-8.4 343.55 161.74)"></rect><rect x="354.94" y="155.46" width="8" height="8" transform="rotate(-8.4 358.94 159.46)"></rect><rect x="370.33" y="153.17" width="8" height="8" transform="rotate(-8.4 374.33 157.17)"></rect><rect x="385.72" y="150.89" width="8" height="8" transform="rotate(-8.4 389.72 154.89)"></rect><rect x="401.11" y="148.60" width="8" height="8" transform="rotate(-8.4 405.11 152.60)"></rect><rect x="416.50" y="146.32" width="8" height="8" transform="rotate(-8.4 420.50 150.32)"></rect><rect x="431.89" y="144.04" width="8" height="8" transform="rotate(-8.4 435.89 148.04)"></rect><rect x="447.28" y="141.75" width="8" height="8" transform="rotate(-8.4 451.28 145.75)"></rect><rect x="462.67" y="139.47" width="8" height="8" transform="rotate(-8.4 466.67 143.47)"></rect><rect x="478.06" y="137.18" width="8" height="8" transform="rotate(-8.4 482.06 141.18)"></rect><rect x="493.45" y="134.90" width="8" height="8" transform="rotate(-8.4 497.45 138.90)"></rect><rect x="508.84" y="132.62" width="8" height="8" transform="rotate(-8.4 512.84 136.62)"></rect><rect x="524.23" y="130.33" width="8" height="8" transform="rotate(-8.4 528.23 134.33)"></rect><rect x="539.62" y="128.05" width="8" height="8" transform="rotate(-8.4 543.62 132.05)"></rect><rect x="555.01" y="125.76" width="8" height="8" transform="rotate(-8.4 559.01 129.76)"></rect><rect x="570.40" y="123.48" width="8" height="8" transform="rotate(-8.4 574.40 127.48)"></rect><rect x="585.79" y="121.20" width="8" height="8" transform="rotate(-8.4 589.79 125.20)"></rect><rect x="601.18" y="118.91" width="8" height="8" transform="rotate(-8.4 605.18 122.91)"></rect><rect x="616.57" y="116.63" width="8" height="8" transform="rotate(-8.4 620.57 120.63)"></rect><rect x="631.96" y="114.34" width="8" height="8" transform="rotate(-8.4 635.96 118.34)"></rect><rect x="647.35" y="112.06" width="8" height="8" transform="rotate(-8.4 651.35 116.06)"></rect><rect x="662.74" y="109.78" width="8" height="8" transform="rotate(-8.4 666.74 113.78)"></rect><rect x="678.13" y="107.49" width="8" height="8" transform="rotate(-8.4 682.13 111.49)"></rect><rect x="711.00" y="164.70" width="8" height="8" transform="rotate(116.6 715.00 168.70)"></rect><rect x="704.05" y="178.56" width="8" height="8" transform="rotate(116.6 708.05 182.56)"></rect><rect x="697.10" y="192.42" width="8" height="8" transform="rotate(116.6 701.10 196.42)"></rect><rect x="690.15" y="206.28" width="8" height="8" transform="rotate(116.6 694.15 210.28)"></rect><rect x="683.20" y="220.14" width="8" height="8" transform="rotate(116.6 687.20 224.14)"></rect><rect x="676.25" y="234.00" width="8" height="8" transform="rotate(116.6 680.25 238.00)"></rect><rect x="669.30" y="247.86" width="8" height="8" transform="rotate(116.6 673.30 251.86)"></rect><rect x="662.35" y="261.72" width="8" height="8" transform="rotate(116.6 666.35 265.72)"></rect><rect x="655.40" y="275.58" width="8" height="8" transform="rotate(116.6 659.40 279.58)"></rect><rect x="648.45" y="289.44" width="8" height="8" transform="rotate(116.6 652.45 293.44)"></rect><rect x="641.50" y="303.30" width="8" height="8" transform="rotate(116.6 645.50 307.30)"></rect><rect x="634.55" y="317.16" width="8" height="8" transform="rotate(116.6 638.55 321.16)"></rect><rect x="627.60" y="331.02" width="8" height="8" transform="rotate(116.6 631.60 335.02)"></rect><rect x="620.65" y="344.88" width="8" height="8" transform="rotate(116.6 624.65 348.88)"></rect><rect x="613.70" y="358.74" width="8" height="8" transform="rotate(116.6 617.70 362.74)"></rect><path d="M82.0 200.7 L102.4 186.7 L100.8 197.7 L105.6 208.5 Z"></path><path d="M704.9 107.8 L681.8 100.1 L687.7 110.3 L686.4 121.3 Z"></path><path d="M730.0 140.0 L709.5 154.0 L721.1 157.0 L730.0 165.0 Z"></path><path d="M603.5 391.0 L604.2 367.7 L612.2 375.8 L623.1 378.7 Z"></path></g></svg>
<div class="b" style="left:0px;top:0px;width:1px;height:651px;background:#6f6f6f;"></div>
</body></html>
